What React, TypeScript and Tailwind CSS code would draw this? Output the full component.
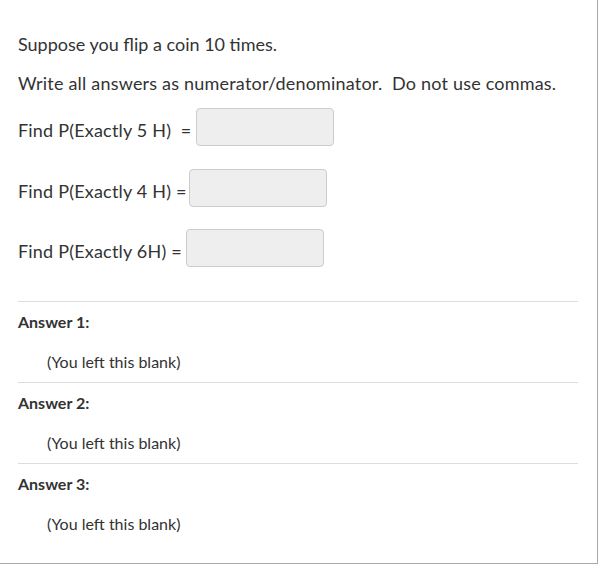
const questions = [
  { label: 'Find P(Exactly 5\u00a0H) \u00a0=', gap: 'mt-[13px]', ml: 'ml-[4px]' },
  { label: 'Find P(Exactly 4\u00a0H) =', gap: 'mt-[23px]', ml: 'ml-[2px]' },
  { label: 'Find P(Exactly 6H) =', gap: 'mt-[22px]', ml: 'ml-[4px]' },
];

export default function App() {
  return (
    <div className="min-h-screen bg-white font-['Lato','Noto_Sans',sans-serif] text-[#333]">
      <div className="w-[598px] h-[564px] border-r border-b border-[#a8a8a8] pt-[32px] pl-[18px]">
        <p className="text-[18px] leading-6">Suppose you flip a coin 10 times.</p>
        <p className="text-[18px] leading-6 mt-[15px] tracking-[0.2px]">
          Write all answers as numerator/denominator.&nbsp; Do not use commas.
        </p>

        {questions.map(q => (
          <div key={q.label} className={`flex items-end ${q.gap}`}>
            <span className="text-[18px] leading-6 mb-[4px] tracking-[0.2px]">{q.label}</span>
            <input
              type="text"
              className={`${q.ml} w-[138px] h-[38px] rounded bg-[#eeeeee] border border-[#cccccc]`}
            />
          </div>
        ))}

        <div className="mt-[34px] w-[560px]">
          {[1, 2, 3].map(n => (
            <div key={n} className="border-t border-[#dddddd] pt-[10px] pb-[10px]">
              <div className="text-base leading-5 font-bold">Answer {n}:</div>
              <div className="text-base leading-5 mt-[20px] pl-[29px]">(You left this blank)</div>
            </div>
          ))}
        </div>
      </div>
    </div>
  );
}
